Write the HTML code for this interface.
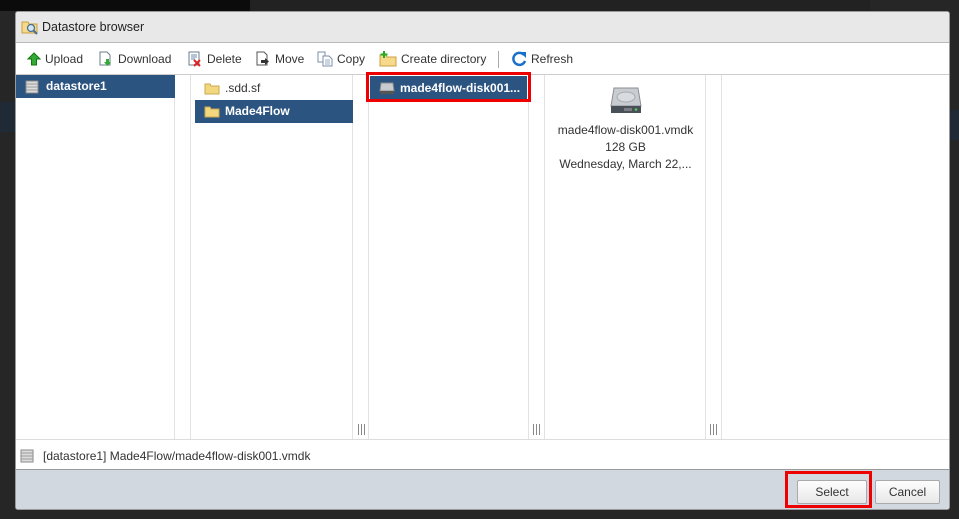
<!DOCTYPE html>
<html><head><meta charset="utf-8"><style>
*{box-sizing:border-box;margin:0;padding:0}
body{width:959px;height:519px;background:#262626;position:relative;overflow:hidden;font-family:"Liberation Sans",Arial,sans-serif;font-size:12px;color:#333}
.abs{position:absolute}
.dlg{left:15px;top:11px;width:935px;height:499px;background:#fff;border-radius:3px;overflow:hidden;border:1px solid #999}
.title{left:0;top:0;width:100%;height:31px;background:#e8e8e8;border-bottom:1px solid #bbb}
.tb{left:0;top:31px;width:100%;height:32px;border-bottom:1px solid #ccc;background:#fff}
.tbi{position:absolute;top:8px;height:16px;line-height:16px;display:flex;align-items:center;gap:4px;white-space:nowrap}
.tbi svg{flex:none}
.col{top:63px;height:364px;border-right:1px solid #e2e2e2}
.sel{background:#2b5480;color:#fff;font-weight:bold}
.row{position:absolute;height:23px;line-height:23px;white-space:nowrap}
.grip{position:absolute;bottom:4px;width:7px;height:11px;border-left:1px solid #888;border-right:1px solid #888}
.grip:after{content:"";position:absolute;left:2px;top:0;width:1px;height:11px;background:#888}
.btn{position:absolute;top:468px;height:24px;border:1px solid #aaa;border-radius:2px;background:linear-gradient(#fdfdfd,#e8e8e8);text-align:center;line-height:22px;color:#333}
</style></head><body>
<div class="abs" style="left:0;top:0;width:250px;height:11px;background:#0b0b0b"></div>
<div class="abs" style="left:250px;top:0;width:620px;height:11px;background:#222"></div>
<div class="abs" style="left:0;top:102px;width:15px;height:30px;background:#1f2a36"></div>
<div class="abs" style="left:950px;top:110px;width:9px;height:30px;background:#1f2a36"></div>
<div class="abs dlg">
 <div class="abs title">
  <svg class="abs" style="left:5px;top:6px" width="18" height="18" viewBox="0 0 18 18"><path d="M1 4h6l1 2h8v9H1z" fill="#f6d98a" stroke="#c9a040"/><circle cx="10" cy="10" r="3.5" fill="#cfe6f7" stroke="#4a6f90" stroke-width="1.3"/><path d="M12.5 12.5l3.5 3.5" stroke="#4a6f90" stroke-width="2"/></svg>
  <div class="abs" style="left:26px;top:8px;font-size:12.5px;color:#222">Datastore browser</div>
 </div>
 <div class="abs tb">
  <div class="tbi" style="left:11px"><svg width="14" height="16"><path d="M7 2l6 6H9.5v6h-5V8H1z" fill="#3a3" stroke="#171"/></svg>Upload</div>
  <div class="tbi" style="left:82px"><svg width="16" height="16"><path d="M2 1h7l3 3v10H2z" fill="#fff" stroke="#6b7b8b"/><path d="M8 8h3v3h2l-3.5 4L6 11h2z" fill="#3a3"/></svg>Download</div>
  <div class="tbi" style="left:171px"><svg width="16" height="16"><path d="M2 1h10v13H2z" fill="#fff" stroke="#6b7b8b"/><path d="M4 4h6M4 6h6M4 8h4" stroke="#6b8bb0"/><path d="M7 9l6 6M13 9l-6 6" stroke="#d22" stroke-width="2"/></svg>Delete</div>
  <div class="tbi" style="left:239px"><svg width="16" height="16"><path d="M2 1h7l3 3v10H2z" fill="#fff" stroke="#555"/><path d="M6 9h4V7l4 3.5-4 3.5v-2H6z" fill="#333"/></svg>Move</div>
  <div class="tbi" style="left:301px"><svg width="16" height="16"><path d="M1 1h7v10H1z" fill="#fff" stroke="#7a8ea8"/><path d="M6 5h6l3 3v7H6z" fill="#fff" stroke="#7a8ea8"/><path d="M8 9h5M8 11h5M8 13h5" stroke="#9ab"/></svg>Copy</div>
  <div class="tbi" style="left:363px"><svg width="18" height="16"><path d="M1 4h6l1 2h9v9H1z" fill="#f6d98a" stroke="#c9a040"/><path d="M5 0v7M1.5 3.5h7" stroke="#2a2" stroke-width="2"/></svg>Create directory</div>
  <div class="abs" style="left:482px;top:8px;width:1px;height:17px;background:#aaa"></div>
  <div class="tbi" style="left:495px"><svg width="16" height="16"><path d="M13 4A6 6 0 1 0 14 10" fill="none" stroke="#1a6fc9" stroke-width="2.5"/><path d="M9 1h6v6z" fill="#1a6fc9"/></svg>Refresh</div>
 </div>
 <div class="abs col" style="left:0;width:159px">
  <div class="row sel" style="left:0;top:0;width:159px;padding-left:30px">datastore1</div>
  <svg class="abs" style="left:9px;top:5px" width="14" height="14"><rect x="1" y="1" width="12" height="12" fill="#ddd" stroke="#888"/><path d="M1 4h12M1 7h12M1 10h12" stroke="#999"/></svg>
 </div>
 <div class="abs col" style="left:159px;width:16px"></div>
 <div class="abs col" style="left:175px;width:162px">
  <div class="row" style="left:4px;top:2px;width:158px;padding-left:30px">.sdd.sf</div>
  <svg class="abs" style="left:13px;top:7px" width="16" height="13"><path d="M1 2h5l1 2h8v8H1z" fill="#f2d77e" stroke="#c8a850"/></svg>
  <div class="row sel" style="left:4px;top:25px;width:158px;padding-left:30px">Made4Flow</div>
  <svg class="abs" style="left:13px;top:30px" width="16" height="13"><path d="M1 2h5l1 2h8v8H1z" fill="#f2d77e" stroke="#c8a850"/></svg>
 </div>
 <div class="abs col" style="left:337px;width:16px"><div class="grip" style="left:5px"></div></div>
 <div class="abs col" style="left:353px;width:160px">
  <div class="row sel" style="left:1px;top:1px;width:157px;height:24px;line-height:24px;padding-left:30px">made4flow-disk001...</div>
  <svg class="abs" style="left:10px;top:6px" width="16" height="14"><path d="M2 2h12l1 8H1z" fill="#c8ccd0" stroke="#888"/><rect x="1" y="10" width="14" height="3" fill="#555"/></svg>
  <div class="abs" style="left:-3px;top:-3px;width:165px;height:30px;border:3px solid #e00"></div>
 </div>
 <div class="abs col" style="left:513px;width:16px"><div class="grip" style="left:4px"></div></div>
 <div class="abs col" style="left:529px;width:161px">
  <svg class="abs" style="left:65px;top:11px" width="32" height="28" viewBox="0 0 32 28"><path d="M4 2h24l3 18H1z" fill="#c9cdd2" stroke="#8a8f95"/><ellipse cx="16" cy="11" rx="9" ry="5" fill="#d8dbdf" stroke="#aaa"/><rect x="1" y="20" width="30" height="7" fill="#4a5058"/><path d="M15 22v3M17 22v3M19 22v3M21 22v3" stroke="#aaa"/><circle cx="26" cy="23.5" r="1.3" fill="#5c5"/></svg>
  <div class="abs" style="left:0;top:47px;width:161px;text-align:center;line-height:17px">made4flow-disk001.vmdk<br>128 GB<br>Wednesday, March 22,...</div>
 </div>
 <div class="abs col" style="left:690px;width:16px"><div class="grip" style="left:4px"></div></div>
 <div class="abs col" style="left:706px;width:229px;border:none"></div>
 <div class="abs" style="left:0;top:427px;width:100%;height:31px;border-top:1px solid #ddd;border-bottom:1px solid #999;background:#fff">
  <svg class="abs" style="left:4px;top:9px" width="14" height="14"><rect x="1" y="1" width="12" height="12" fill="#ddd" stroke="#888"/><path d="M1 4h12M1 7h12M1 10h12" stroke="#999"/></svg>
  <div class="abs" style="left:27px;top:9px">[datastore1] Made4Flow/made4flow-disk001.vmdk</div>
 </div>
 <div class="abs" style="left:0;top:458px;width:100%;height:41px;background:#d2d8e0"></div>
 <div class="btn" style="left:781px;width:70px">Select</div>
 <div class="abs" style="left:769px;top:459px;width:87px;height:37px;border:3px solid #e00"></div>
 <div class="btn" style="left:859px;width:65px">Cancel</div>
</div>
</body></html>
